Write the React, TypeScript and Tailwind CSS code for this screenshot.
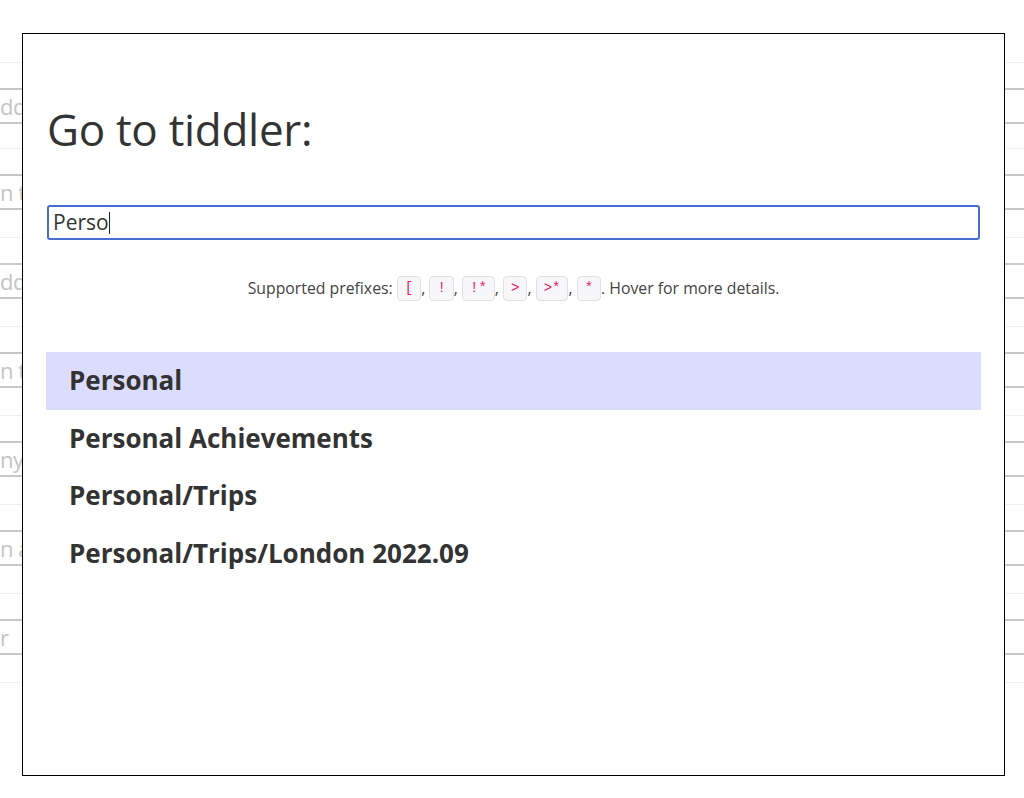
import React from "react";

const bgRows = ["dd", "n t", "dd", "n t", "ny", "n a", "r"];
const prefixes = ["[", "!", "!*", ">", ">*", "*"];
const results = [
  "Personal",
  "Personal Achievements",
  "Personal/Trips",
  "Personal/Trips/London 2022.09",
];

const BackgroundPage: React.FC = () => (
  <div className="pt-[62px]">
    {bgRows.map((text, i) => (
      <div
        key={i}
        className={`border-t border-[#efefef] pt-[25px] ${i === 0 ? "h-[86px]" : "h-[89px]"}`}
      >
        <div className="h-[36px] border-y-2 border-[#c8c8c8] flex items-center text-[22px] leading-none text-[#c4c4c4] tracking-[-0.5px]">
          {text}
        </div>
      </div>
    ))}
    <div className="border-t border-[#efefef]" />
  </div>
);

const GotoModal: React.FC = () => (
  <div className="absolute left-[22px] top-[33px] w-[983px] h-[743px] border border-black bg-white">
    <div className="px-6">
      <h1 className="mt-[73px] h-[44px] text-[44px] leading-none font-normal text-[#333333] tracking-[-0.3px]">
        Go to tiddler:
      </h1>
      <div className="mt-[54px] h-[35px] rounded-[3px] border-2 border-[#4a6bd0] flex items-center pl-[4px] text-[21px] text-[#333333]">
        <span>Perso</span>
        <span className="inline-block w-px h-[22px] bg-[#222222]" />
      </div>
      <div className="mt-[34px] h-[29px] flex items-center justify-center text-[15.8px] text-[#444444]">
        <span>Supported prefixes:&nbsp;</span>
        {prefixes.map((p, i) => (
          <React.Fragment key={p}>
            <code
              className="inline-flex items-center h-[25px] px-[7px] rounded-[4px] border border-[#e1e1e8] bg-[#f7f7f9] text-[#e8175d] text-[14px]"
              style={{ fontFamily: '"Liberation Mono", monospace' }}
            >
              {p}
            </code>
            <span>{i < prefixes.length - 1 ? ",\u00a0" : ". Hover for more details."}</span>
          </React.Fragment>
        ))}
      </div>
    </div>
    <ul className="mt-[49px] px-[23px]">
      {results.map((r, i) => (
        <li
          key={r}
          className={`h-[57.5px] flex items-center pl-[23px] text-[26px] font-bold text-[#333333] ${
            i === 0 ? "bg-[#dcdcfc]" : ""
          }`}
        >
          {r}
        </li>
      ))}
    </ul>
  </div>
);

export default function App() {
  return (
    <div
      className="relative w-full h-[798px] overflow-hidden bg-white"
      style={{ fontFamily: '"Open Sans", "Noto Sans", sans-serif' }}
    >
      <BackgroundPage />
      <GotoModal />
    </div>
  );
}
